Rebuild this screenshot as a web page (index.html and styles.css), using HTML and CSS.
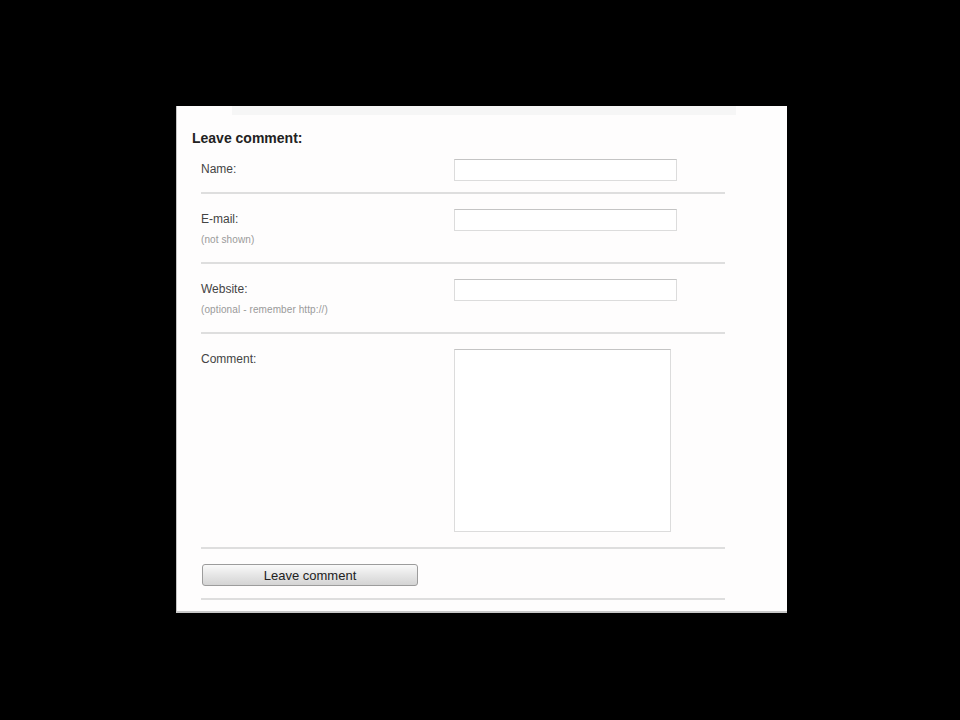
FILE: index.html
```html
<!DOCTYPE html>
<html>
<head>
<meta charset="utf-8">
<link rel="stylesheet" href="styles.css">
</head>
<body>
<div class="panel">
  <div class="band"></div>
  <h2 class="title">Leave comment:</h2>
  <form class="form">
    <div class="row row-first">
      <div class="label-col"><div class="label">Name:</div></div>
      <div class="field-col"><input class="input" type="text"></div>
    </div>
    <div class="row">
      <div class="label-col"><div class="label">E-mail:</div><div class="hint">(not shown)</div></div>
      <div class="field-col"><input class="input" type="text"></div>
    </div>
    <div class="row">
      <div class="label-col"><div class="label">Website:</div><div class="hint">(optional - remember http://)</div></div>
      <div class="field-col"><input class="input" type="text"></div>
    </div>
    <div class="row">
      <div class="label-col"><div class="label">Comment:</div></div>
      <div class="field-col"><textarea class="textarea"></textarea></div>
    </div>
    <div class="row row-button">
      <button class="button" type="button">Leave comment</button>
    </div>
  </form>
</div>
</body>
</html>
```
FILE: styles.css
```css
html, body {
  margin: 0;
  padding: 0;
  background: #000;
}
body {
  width: 960px;
  height: 720px;
  font-family: "Liberation Sans", Arial, sans-serif;
  overflow: hidden;
}
.panel {
  margin-left: 176px;
  margin-top: 106px;
  width: 610px;
  height: 505px;
  background: #fefdfd;
  border-left: 1px solid #c4c4c4;
  border-bottom: 2px solid #c8c8c8;
}
.band {
  margin-left: 55px;
  width: 504px;
  height: 9px;
  background: #f6f6f6;
}
.title {
  margin: 14px 0 0 15px;
  font-size: 14px;
  line-height: 18px;
  font-weight: bold;
  color: #222;
}
.form {
  margin: 0 0 0 24px;
  width: 524px;
}
.row {
  display: flex;
  padding: 15px 0;
  border-bottom: 2px solid #dedede;
}
.row-first {
  padding-top: 12px;
  padding-bottom: 11px;
}
.label-col {
  width: 253px;
  flex: none;
  padding-top: 1px;
}
.label {
  font-size: 12px;
  line-height: 18px;
  color: #444;
}
.hint {
  margin-top: 5px;
  font-size: 10px;
  line-height: 14px;
  letter-spacing: 0.1px;
  color: #9a9a9a;
}
.input {
  display: block;
  box-sizing: border-box;
  width: 223px;
  height: 22px;
  margin: 0;
  padding: 0;
  background: #fff;
  border: 1px solid #dcdcdc;
  border-top-color: #c4c4c4;
  outline: none;
}
.textarea {
  display: block;
  box-sizing: border-box;
  width: 217px;
  height: 183px;
  margin: 0;
  padding: 0;
  background: #fff;
  border: 1px solid #dcdcdc;
  border-top-color: #c4c4c4;
  resize: none;
  outline: none;
}
.row-button {
  padding-top: 15px;
  padding-bottom: 12px;
}
.button {
  box-sizing: border-box;
  margin-left: 1px;
  width: 216px;
  height: 22px;
  padding: 0;
  border: 1px solid #9c9c9c;
  border-radius: 3px;
  background: linear-gradient(#fafafa, #e6e6e6 50%, #d4d4d4);
  font-family: "Liberation Sans", Arial, sans-serif;
  font-size: 13px;
  color: #222;
}
```
